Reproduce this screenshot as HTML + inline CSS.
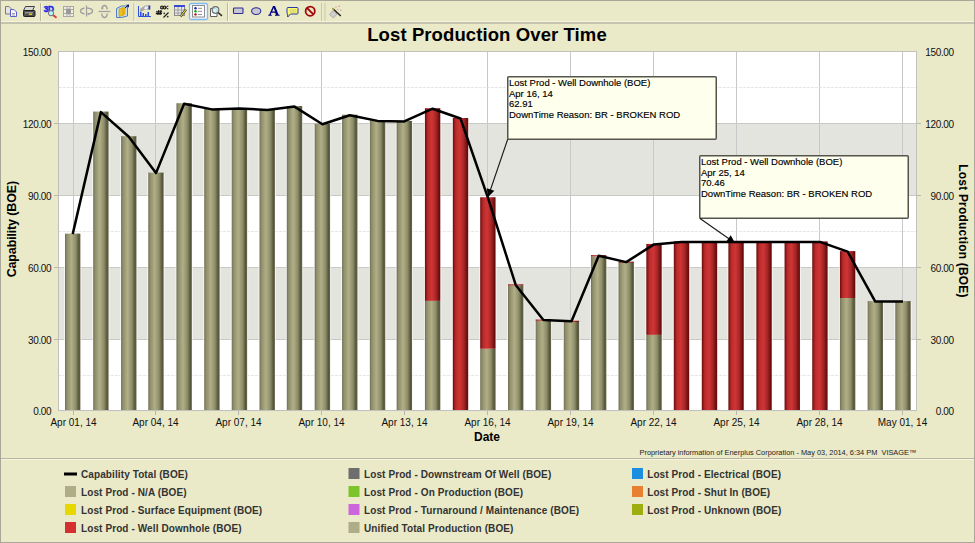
<!DOCTYPE html><html><head><meta charset="utf-8"><style>html,body{margin:0;padding:0;background:#EAE9C8;}svg{display:block;}text{font-family:"Liberation Sans",sans-serif;}</style></head><body>
<svg width="975" height="543" viewBox="0 0 975 543">
<defs>
<linearGradient id="gg" x1="0" x2="1" y1="0" y2="0">
<stop offset="0" stop-color="#707052"/><stop offset="0.12" stop-color="#8E8E6C"/><stop offset="0.42" stop-color="#B0AF86"/><stop offset="0.7" stop-color="#8F8E6B"/><stop offset="0.9" stop-color="#56563A"/><stop offset="1" stop-color="#66664C"/>
</linearGradient>
<linearGradient id="rg" x1="0" x2="1" y1="0" y2="0">
<stop offset="0" stop-color="#6A0808"/><stop offset="0.08" stop-color="#901818"/><stop offset="0.2" stop-color="#B82C2C"/><stop offset="0.45" stop-color="#D23434"/><stop offset="0.7" stop-color="#A82828"/><stop offset="0.88" stop-color="#781414"/><stop offset="0.95" stop-color="#6A0A0A"/><stop offset="1" stop-color="#7A1E1E"/>
</linearGradient>
</defs>
<rect x="0" y="0" width="975" height="543" fill="#EAE9C8"/>
<rect x="0" y="0" width="975" height="1" fill="#A9A898"/>
<rect x="0" y="0" width="1" height="543" fill="#A9A898"/>
<rect x="974" y="0" width="1" height="543" fill="#A9A898"/>
<rect x="0" y="542" width="975" height="1" fill="#A9A898"/>
<g>
<!-- copy -->
<path d="M5.5 6.5 h3.5 l2 2 v5.5 h-5.5 z" fill="#E4E4E4" stroke="#7A7A7A" stroke-width="1"/>
<path d="M10.5 9.5 h3.5 l2.5 2.5 v4.5 h-6 z" fill="#F6F6FF" stroke="#5C5CD0" stroke-width="1"/>
<rect x="12" y="13" width="3" height="0.8" fill="#909090"/><rect x="12" y="14.6" width="3" height="0.8" fill="#909090"/>
<!-- printer -->
<path d="M25.5 6.5 h9 l-2 4 h-9 z" fill="#D8D8D8" stroke="#404040" stroke-width="1"/>
<rect x="23.5" y="10.5" width="11.5" height="6" rx="1" fill="#505050" stroke="#202020" stroke-width="1"/>
<rect x="25" y="12" width="8" height="1.5" fill="#909090"/>
<rect x="29" y="13.5" width="3" height="1.5" fill="#D8D000"/>
<!-- separators -->
<rect x="40" y="3" width="1" height="18" fill="#B8B7A4"/><rect x="41" y="3" width="1" height="18" fill="#F8F6E0"/>
<!-- 3D -->
<text x="43.8" y="11.9" font-size="8.2" font-weight="bold" fill="#1A2CE8" font-family="Liberation Sans" letter-spacing="-0.4" stroke="#1A2CE8" stroke-width="0.5">3D</text>
<circle cx="51" cy="13.2" r="2.6" fill="#B8F0F8" stroke="#707070" stroke-width="1"/>
<line x1="53" y1="15" x2="56.5" y2="17.8" stroke="#E03838" stroke-width="1.8"/>
<!-- grid (disabled) -->
<rect x="63.5" y="6.5" width="10" height="10" fill="#F0EFE0" stroke="#A8A8A8" stroke-width="1"/>
<line x1="67" y1="6.5" x2="67" y2="16.5" stroke="#A8A8A8"/><line x1="70" y1="6.5" x2="70" y2="16.5" stroke="#A8A8A8"/>
<line x1="63.5" y1="9.5" x2="73.5" y2="9.5" stroke="#A8A8A8"/><line x1="63.5" y1="13.5" x2="73.5" y2="13.5" stroke="#A8A8A8"/>
<ellipse cx="68.5" cy="11.5" rx="2.5" ry="3" fill="#989898"/>
<!-- rotate h -->
<line x1="86.5" y1="5.5" x2="86.5" y2="16.5" stroke="#A0A0A0" stroke-width="1.2"/>
<path d="M84.5 8 Q80.5 9 80.5 11 Q80.5 13 84.5 14" fill="none" stroke="#A0A0A0" stroke-width="1.4"/>
<path d="M87 8 Q92.5 8.5 92.5 11 Q92.5 13.5 88 14" fill="none" stroke="#A0A0A0" stroke-width="1.4"/>
<path d="M87.5 12.5 l2 1.5 l-2 1.5 z" fill="#A0A0A0"/>
<!-- rotate v -->
<line x1="98.5" y1="11.5" x2="110.5" y2="11.5" stroke="#A0A0A0" stroke-width="1.2"/>
<path d="M101.8 9.5 Q102 5.5 104.5 5.5 Q107 5.5 107.2 9.5" fill="none" stroke="#A0A0A0" stroke-width="1.4"/>
<path d="M101.8 13.5 Q102 17.5 104.5 17.5 Q107 17.5 107.2 13.5" fill="none" stroke="#A0A0A0" stroke-width="1.4"/>
<path d="M101 8.5 l1.5 -2 l1.5 2 z" fill="#A0A0A0"/>
<!-- folder -->
<path d="M116.5 8.5 l5 -2.5 h6 v10 l-6 1.5 h-5 z" fill="#C8E0F8" stroke="#5080C0" stroke-width="1"/>
<path d="M119 9 l4 -1.5 v8 l-4 1 z" fill="#F0C020" stroke="#C09000" stroke-width="0.6"/>
<path d="M123 8 l2.5 -1 v7.5 l-2.5 1 z" fill="#E8B010"/>
<path d="M126 4.8 h3 v3 z" fill="#101870"/><line x1="125" y1="8" x2="128.5" y2="5" stroke="#101870" stroke-width="1"/>
<rect x="133.5" y="3" width="1" height="18" fill="#B8B7A4"/><rect x="134.5" y="3" width="1" height="18" fill="#F8F6E0"/>
<!-- chart icon -->
<path d="M140 9 l5 -3.5 h5 v4 h-5 l-5 3 z" fill="#A8A8A8"/>
<path d="M145 6.5 h4 l-2 2.5 h-3 z" fill="#F0F0F0"/>
<rect x="148.5" y="5.5" width="1.8" height="4" fill="#2838C8"/>
<line x1="138.5" y1="6" x2="138.5" y2="16.5" stroke="#3050D8" stroke-width="1"/>
<line x1="138.5" y1="16.5" x2="151" y2="16.5" stroke="#3050D8" stroke-width="1"/>
<rect x="140" y="12" width="1.5" height="4" fill="#2848F0"/><rect x="142.5" y="13" width="1.5" height="3" fill="#2848F0"/>
<rect x="145" y="14" width="1.5" height="2" fill="#2848F0"/><rect x="147.5" y="12" width="1.5" height="4" fill="#2848F0"/>
<!-- #abc% -->
<g fill="none" stroke="#181818">
<path d="M160.8 6 v3 M160.8 7.5 q0 -1.5 1.2 -1.5 q1 0 1 1.5 q0 1.5 -1 1.5 q-1.2 0 -1.2 -1.5" stroke-width="1.1"/>
<path d="M163.6 6 v3 M163.6 7.5 q0 -1.5 1.1 -1.5 q1 0 1 1.5 q0 1.5 -1 1.5 q-1.1 0 -1.1 -1.5" stroke-width="1.1"/>
<path d="M168.3 6.2 q-1.6 -0.5 -1.8 1.3 q0.2 1.8 1.8 1.3" stroke-width="1"/>
<path d="M156 11.8 h6.2 M155.8 13.6 h6.2 M158.8 10 l-1 5 M161 10 l-1 5" stroke-width="1.2"/>
<path d="M163.5 17.5 l5 -5" stroke-width="1.1"/>
</g>
<circle cx="164.3" cy="13.3" r="0.9" fill="#303030"/><circle cx="167.7" cy="16.6" r="0.9" fill="#303030"/>
<!-- table -->
<rect x="174.5" y="5.5" width="10" height="10" fill="#E8E8E8" stroke="#8C8C8C" stroke-width="1"/>
<rect x="174" y="5" width="11" height="2" fill="#3848D0"/>
<line x1="178" y1="7" x2="178" y2="15.5" stroke="#9C9C9C"/><line x1="181.5" y1="7" x2="181.5" y2="15.5" stroke="#9C9C9C"/>
<line x1="174.5" y1="10" x2="184.5" y2="10" stroke="#9C9C9C"/><line x1="174.5" y1="13" x2="184.5" y2="13" stroke="#9C9C9C"/>
<line x1="180.5" y1="16.5" x2="186" y2="9.5" stroke="#303030" stroke-width="2.2"/>
<line x1="180.5" y1="16.5" x2="186" y2="9.5" stroke="#F0E040" stroke-width="1.1"/>
<!-- legend pressed -->
<rect x="189.5" y="3.5" width="18" height="16" rx="1.5" fill="#F4F8FC" stroke="#80B8F0" stroke-width="1.3"/>
<rect x="192.5" y="5.5" width="12" height="11.5" fill="#FFFFFF" stroke="#8C8C8C" stroke-width="1"/>
<circle cx="195.5" cy="8.2" r="1.2" fill="#1020A8"/><circle cx="195.5" cy="11.2" r="1.2" fill="#10A010"/><circle cx="195.5" cy="14.4" r="1.2" fill="#A01010"/>
<rect x="198" y="7.8" width="4" height="1" fill="#909090"/><rect x="198" y="10.8" width="4" height="1" fill="#909090"/><rect x="198" y="14" width="4" height="1" fill="#909090"/>
<!-- zoom page -->
<path d="M210.5 8.5 h5 l1.5 1.5 v6.5 h-6.5 z" fill="#FFFFFF" stroke="#606060" stroke-width="1"/>
<circle cx="215.5" cy="10" r="3.3" fill="#C8F4F8" fill-opacity="0.8" stroke="#707070" stroke-width="1.2"/>
<line x1="218" y1="12.5" x2="222" y2="15.8" stroke="#303030" stroke-width="1.6"/>
<rect x="227" y="3" width="1" height="18" fill="#B8B7A4"/><rect x="228" y="3" width="1" height="18" fill="#F8F6E0"/>
<!-- rect -->
<rect x="233.5" y="8" width="9.5" height="5.5" rx="0.8" fill="#C8C8D4" stroke="#2C2C98" stroke-width="1.1"/>
<!-- ellipse -->
<ellipse cx="256.2" cy="11.1" rx="4.6" ry="3.4" fill="#C8C8D4" stroke="#2C2C98" stroke-width="1.1"/>
<!-- A -->
<path d="M273 6 h2 l3.6 8.8 h1 v1 h-4.6 v-1 h1 l-0.8 -2 h-3.8 l-0.7 2 h1.1 v1 h-3.5 v-1 h0.9 z M272.2 11.6 h2.9 l-1.5 -3.6 z" fill="#000080" fill-rule="evenodd"/>
<!-- bubble -->
<path d="M288 7.5 h9 q1 0 1 1 v4.5 q0 1 -1 1 h-6.5 l-2.8 3 v-3 h0 q-0.7 0 -0.7 -1 v-4.5 q0 -1 1 -1 z" fill="#FFFF70" stroke="#2838A8" stroke-width="1"/>
<rect x="289.5" y="9.5" width="7" height="1" fill="#C8C070"/><rect x="289.5" y="11.5" width="7" height="1" fill="#C8C070"/>
<!-- no -->
<circle cx="310.2" cy="11.2" r="4.6" fill="none" stroke="#A00808" stroke-width="1.8"/>
<line x1="307" y1="8" x2="313.4" y2="14.4" stroke="#A00808" stroke-width="1.8"/>
<rect x="321" y="3" width="1" height="18" fill="#C8C7B4"/><rect x="324.5" y="3" width="1" height="18" fill="#C8C7B4"/>
<!-- wand -->
<path d="M329.5 14.5 l3.5 -4 l4 3.5 l-3.5 4 z" fill="#D0D0D0" stroke="#A0A0A0" stroke-width="0.8"/>
<line x1="332.5" y1="8.2" x2="340.8" y2="16" stroke="#202020" stroke-width="1.4"/>
<line x1="332.5" y1="8.2" x2="334" y2="9.6" stroke="#D0C020" stroke-width="1.4"/>
<circle cx="336" cy="7" r="0.7" fill="#D890A0"/><circle cx="339.3" cy="6.3" r="0.8" fill="#D890A0"/><circle cx="337.8" cy="9.4" r="0.6" fill="#D890A0"/><circle cx="340.8" cy="10.3" r="0.8" fill="#D890A0"/>
</g>
<rect x="1" y="21" width="973" height="1" fill="#F6F4DA"/>
<rect x="1" y="22" width="973" height="2" fill="#C4C3B0"/>
<rect x="59" y="51" width="858" height="359" fill="#FFFFFF"/>
<rect x="59" y="123" width="858" height="72" fill="#E4E4DF"/>
<rect x="59" y="267" width="858" height="72" fill="#E4E4DF"/>
<line x1="59" x2="917" y1="375.5" y2="375.5" stroke="#E6E6E6" stroke-width="1" stroke-dasharray="3,1"/>
<line x1="59" x2="917" y1="231.5" y2="231.5" stroke="#E6E6E6" stroke-width="1" stroke-dasharray="3,1"/>
<line x1="59" x2="917" y1="87.5" y2="87.5" stroke="#E6E6E6" stroke-width="1" stroke-dasharray="3,1"/>
<line x1="59" x2="917" y1="339.5" y2="339.5" stroke="#C8C8C4" stroke-width="1"/>
<line x1="59" x2="917" y1="267.5" y2="267.5" stroke="#C8C8C4" stroke-width="1"/>
<line x1="59" x2="917" y1="195.5" y2="195.5" stroke="#C8C8C4" stroke-width="1"/>
<line x1="59" x2="917" y1="123.5" y2="123.5" stroke="#C8C8C4" stroke-width="1"/>
<line x1="73.5" x2="73.5" y1="51" y2="410" stroke="#C8C8C8" stroke-width="1"/>
<line x1="155.5" x2="155.5" y1="51" y2="410" stroke="#C8C8C8" stroke-width="1"/>
<line x1="238.5" x2="238.5" y1="51" y2="410" stroke="#C8C8C8" stroke-width="1"/>
<line x1="321.5" x2="321.5" y1="51" y2="410" stroke="#C8C8C8" stroke-width="1"/>
<line x1="404.5" x2="404.5" y1="51" y2="410" stroke="#C8C8C8" stroke-width="1"/>
<line x1="487.5" x2="487.5" y1="51" y2="410" stroke="#C8C8C8" stroke-width="1"/>
<line x1="570.5" x2="570.5" y1="51" y2="410" stroke="#C8C8C8" stroke-width="1"/>
<line x1="653.5" x2="653.5" y1="51" y2="410" stroke="#C8C8C8" stroke-width="1"/>
<line x1="736.5" x2="736.5" y1="51" y2="410" stroke="#C8C8C8" stroke-width="1"/>
<line x1="819.5" x2="819.5" y1="51" y2="410" stroke="#C8C8C8" stroke-width="1"/>
<line x1="902.5" x2="902.5" y1="51" y2="410" stroke="#C8C8C8" stroke-width="1"/>
<rect x="58.5" y="51.5" width="858" height="359" fill="none" stroke="#C0C0BC" stroke-width="1"/>
<rect x="64.00" y="234.61" width="17.4" height="175.39" fill="#FFFFFF" opacity="0.6"/>
<rect x="65.00" y="233.61" width="15.4" height="176.39" fill="url(#gg)"/>
<rect x="92.19" y="112.56" width="17.4" height="297.44" fill="#FFFFFF" opacity="0.6"/>
<rect x="93.19" y="111.56" width="15.4" height="298.44" fill="url(#gg)"/>
<rect x="120.07" y="137.21" width="17.4" height="272.79" fill="#FFFFFF" opacity="0.6"/>
<rect x="121.07" y="136.21" width="15.4" height="273.79" fill="url(#gg)"/>
<rect x="147.26" y="173.58" width="17.4" height="236.42" fill="#FFFFFF" opacity="0.6"/>
<rect x="148.26" y="172.58" width="15.4" height="237.42" fill="url(#gg)"/>
<rect x="175.45" y="104.18" width="17.4" height="305.82" fill="#FFFFFF" opacity="0.6"/>
<rect x="176.45" y="103.18" width="15.4" height="306.82" fill="url(#gg)"/>
<rect x="203.23" y="109.92" width="17.4" height="300.08" fill="#FFFFFF" opacity="0.6"/>
<rect x="204.23" y="108.92" width="15.4" height="301.08" fill="url(#gg)"/>
<rect x="230.72" y="108.97" width="17.4" height="301.03" fill="#FFFFFF" opacity="0.6"/>
<rect x="231.72" y="107.97" width="15.4" height="302.03" fill="url(#gg)"/>
<rect x="258.51" y="110.40" width="17.4" height="299.60" fill="#FFFFFF" opacity="0.6"/>
<rect x="259.51" y="109.40" width="15.4" height="300.60" fill="url(#gg)"/>
<rect x="285.80" y="107.05" width="17.4" height="302.95" fill="#FFFFFF" opacity="0.6"/>
<rect x="286.80" y="106.05" width="15.4" height="303.95" fill="url(#gg)"/>
<rect x="313.68" y="124.76" width="17.4" height="285.24" fill="#FFFFFF" opacity="0.6"/>
<rect x="314.68" y="123.76" width="15.4" height="286.24" fill="url(#gg)"/>
<rect x="341.07" y="115.67" width="17.4" height="294.33" fill="#FFFFFF" opacity="0.6"/>
<rect x="342.07" y="114.67" width="15.4" height="295.33" fill="url(#gg)"/>
<rect x="368.86" y="121.41" width="17.4" height="288.59" fill="#FFFFFF" opacity="0.6"/>
<rect x="369.86" y="120.41" width="15.4" height="289.59" fill="url(#gg)"/>
<rect x="395.64" y="121.89" width="17.4" height="288.11" fill="#FFFFFF" opacity="0.6"/>
<rect x="396.64" y="120.89" width="15.4" height="289.11" fill="url(#gg)"/>
<rect x="423.93" y="109.20" width="17.4" height="300.80" fill="#FFFFFF" opacity="0.6"/>
<rect x="424.93" y="300.87" width="15.4" height="109.13" fill="url(#gg)"/>
<rect x="424.93" y="108.20" width="15.4" height="192.66" fill="url(#rg)"/>
<rect x="451.82" y="119.02" width="17.4" height="290.98" fill="#FFFFFF" opacity="0.6"/>
<rect x="452.82" y="118.02" width="15.4" height="291.98" fill="url(#rg)"/>
<rect x="479.20" y="198.24" width="17.4" height="211.76" fill="#FFFFFF" opacity="0.6"/>
<rect x="480.20" y="348.73" width="15.4" height="61.27" fill="url(#gg)"/>
<rect x="480.20" y="197.24" width="15.4" height="151.50" fill="url(#rg)"/>
<rect x="506.99" y="285.35" width="17.4" height="124.65" fill="#FFFFFF" opacity="0.6"/>
<rect x="507.99" y="285.55" width="15.4" height="124.45" fill="url(#gg)"/>
<rect x="507.99" y="284.35" width="15.4" height="1.20" fill="url(#rg)"/>
<rect x="534.68" y="320.53" width="17.4" height="89.47" fill="#FFFFFF" opacity="0.6"/>
<rect x="535.68" y="320.73" width="15.4" height="89.27" fill="url(#gg)"/>
<rect x="535.68" y="319.53" width="15.4" height="1.20" fill="url(#rg)"/>
<rect x="562.77" y="321.73" width="17.4" height="88.27" fill="#FFFFFF" opacity="0.6"/>
<rect x="563.77" y="321.93" width="15.4" height="88.07" fill="url(#gg)"/>
<rect x="563.77" y="320.73" width="15.4" height="1.20" fill="url(#rg)"/>
<rect x="589.95" y="256.15" width="17.4" height="153.85" fill="#FFFFFF" opacity="0.6"/>
<rect x="590.95" y="256.35" width="15.4" height="153.65" fill="url(#gg)"/>
<rect x="590.95" y="255.15" width="15.4" height="1.20" fill="url(#rg)"/>
<rect x="617.54" y="262.62" width="17.4" height="147.38" fill="#FFFFFF" opacity="0.6"/>
<rect x="618.54" y="262.81" width="15.4" height="147.19" fill="url(#gg)"/>
<rect x="618.54" y="261.62" width="15.4" height="1.20" fill="url(#rg)"/>
<rect x="645.33" y="244.90" width="17.4" height="165.10" fill="#FFFFFF" opacity="0.6"/>
<rect x="646.33" y="334.85" width="15.4" height="75.15" fill="url(#gg)"/>
<rect x="646.33" y="243.90" width="15.4" height="90.95" fill="url(#rg)"/>
<rect x="672.81" y="242.37" width="17.4" height="167.63" fill="#FFFFFF" opacity="0.6"/>
<rect x="673.81" y="241.37" width="15.4" height="168.63" fill="url(#rg)"/>
<rect x="700.80" y="242.37" width="17.4" height="167.63" fill="#FFFFFF" opacity="0.6"/>
<rect x="701.80" y="241.37" width="15.4" height="168.63" fill="url(#rg)"/>
<rect x="727.39" y="242.37" width="17.4" height="167.63" fill="#FFFFFF" opacity="0.6"/>
<rect x="728.39" y="241.37" width="15.4" height="168.63" fill="url(#rg)"/>
<rect x="755.38" y="242.37" width="17.4" height="167.63" fill="#FFFFFF" opacity="0.6"/>
<rect x="756.38" y="241.37" width="15.4" height="168.63" fill="url(#rg)"/>
<rect x="783.56" y="242.37" width="17.4" height="167.63" fill="#FFFFFF" opacity="0.6"/>
<rect x="784.56" y="241.37" width="15.4" height="168.63" fill="url(#rg)"/>
<rect x="811.25" y="242.37" width="17.4" height="167.63" fill="#FFFFFF" opacity="0.6"/>
<rect x="812.25" y="241.37" width="15.4" height="168.63" fill="url(#rg)"/>
<rect x="838.94" y="252.08" width="17.4" height="157.92" fill="#FFFFFF" opacity="0.6"/>
<rect x="839.94" y="297.99" width="15.4" height="112.01" fill="url(#gg)"/>
<rect x="839.94" y="251.08" width="15.4" height="46.91" fill="url(#rg)"/>
<rect x="866.62" y="302.10" width="17.4" height="107.90" fill="#FFFFFF" opacity="0.6"/>
<rect x="867.62" y="301.10" width="15.4" height="108.90" fill="url(#gg)"/>
<rect x="894.31" y="302.10" width="17.4" height="107.90" fill="#FFFFFF" opacity="0.6"/>
<rect x="895.31" y="301.10" width="15.4" height="108.90" fill="url(#gg)"/>
<polyline points="72.7,234.1 100.9,112.1 128.8,136.7 156.0,173.1 184.1,103.7 211.9,109.4 239.4,108.5 267.2,109.9 294.5,106.6 322.4,124.3 349.8,115.2 377.6,120.9 404.3,121.4 432.6,108.7 460.5,118.5 487.9,197.7 515.7,284.9 543.4,320.0 571.5,321.2 598.7,255.7 626.2,262.1 654.0,244.4 681.5,241.9 709.5,241.9 736.1,241.9 764.1,241.9 792.3,241.9 819.9,241.9 847.6,251.6 875.3,301.6 903.0,301.6" fill="none" stroke="#000" stroke-width="2.5" stroke-linejoin="round"/>
<line x1="73.5" x2="73.5" y1="411" y2="415" stroke="#B8B8B0" stroke-width="1"/>
<line x1="155.5" x2="155.5" y1="411" y2="415" stroke="#B8B8B0" stroke-width="1"/>
<line x1="238.5" x2="238.5" y1="411" y2="415" stroke="#B8B8B0" stroke-width="1"/>
<line x1="321.5" x2="321.5" y1="411" y2="415" stroke="#B8B8B0" stroke-width="1"/>
<line x1="404.5" x2="404.5" y1="411" y2="415" stroke="#B8B8B0" stroke-width="1"/>
<line x1="487.5" x2="487.5" y1="411" y2="415" stroke="#B8B8B0" stroke-width="1"/>
<line x1="570.5" x2="570.5" y1="411" y2="415" stroke="#B8B8B0" stroke-width="1"/>
<line x1="653.5" x2="653.5" y1="411" y2="415" stroke="#B8B8B0" stroke-width="1"/>
<line x1="736.5" x2="736.5" y1="411" y2="415" stroke="#B8B8B0" stroke-width="1"/>
<line x1="819.5" x2="819.5" y1="411" y2="415" stroke="#B8B8B0" stroke-width="1"/>
<line x1="902.5" x2="902.5" y1="411" y2="415" stroke="#B8B8B0" stroke-width="1"/>
<line x1="54" x2="58" y1="339.5" y2="339.5" stroke="#B8B8B0" stroke-width="1"/>
<line x1="917" x2="921" y1="339.5" y2="339.5" stroke="#B8B8B0" stroke-width="1"/>
<line x1="54" x2="58" y1="267.5" y2="267.5" stroke="#B8B8B0" stroke-width="1"/>
<line x1="917" x2="921" y1="267.5" y2="267.5" stroke="#B8B8B0" stroke-width="1"/>
<line x1="54" x2="58" y1="195.5" y2="195.5" stroke="#B8B8B0" stroke-width="1"/>
<line x1="917" x2="921" y1="195.5" y2="195.5" stroke="#B8B8B0" stroke-width="1"/>
<line x1="54" x2="58" y1="123.5" y2="123.5" stroke="#B8B8B0" stroke-width="1"/>
<line x1="917" x2="921" y1="123.5" y2="123.5" stroke="#B8B8B0" stroke-width="1"/>
<text x="51.3" y="414.9" font-size="10" fill="#111" text-anchor="end" letter-spacing="-0.35">0.00</text>
<text x="953.8" y="414.9" font-size="10" fill="#111" text-anchor="end" letter-spacing="-0.35">0.00</text>
<text x="51.3" y="343.9" font-size="10" fill="#111" text-anchor="end" letter-spacing="-0.35">30.00</text>
<text x="953.8" y="343.9" font-size="10" fill="#111" text-anchor="end" letter-spacing="-0.35">30.00</text>
<text x="51.3" y="271.9" font-size="10" fill="#111" text-anchor="end" letter-spacing="-0.35">60.00</text>
<text x="953.8" y="271.9" font-size="10" fill="#111" text-anchor="end" letter-spacing="-0.35">60.00</text>
<text x="51.3" y="199.9" font-size="10" fill="#111" text-anchor="end" letter-spacing="-0.35">90.00</text>
<text x="953.8" y="199.9" font-size="10" fill="#111" text-anchor="end" letter-spacing="-0.35">90.00</text>
<text x="51.3" y="127.9" font-size="10" fill="#111" text-anchor="end" letter-spacing="-0.35">120.00</text>
<text x="953.8" y="127.9" font-size="10" fill="#111" text-anchor="end" letter-spacing="-0.35">120.00</text>
<text x="51.3" y="55.9" font-size="10" fill="#111" text-anchor="end" letter-spacing="-0.35">150.00</text>
<text x="953.8" y="55.9" font-size="10" fill="#111" text-anchor="end" letter-spacing="-0.35">150.00</text>
<text x="73.5" y="426" font-size="10" fill="#111" text-anchor="middle">Apr 01, 14</text>
<text x="155.5" y="426" font-size="10" fill="#111" text-anchor="middle">Apr 04, 14</text>
<text x="238.5" y="426" font-size="10" fill="#111" text-anchor="middle">Apr 07, 14</text>
<text x="321.5" y="426" font-size="10" fill="#111" text-anchor="middle">Apr 10, 14</text>
<text x="404.5" y="426" font-size="10" fill="#111" text-anchor="middle">Apr 13, 14</text>
<text x="487.5" y="426" font-size="10" fill="#111" text-anchor="middle">Apr 16, 14</text>
<text x="570.5" y="426" font-size="10" fill="#111" text-anchor="middle">Apr 19, 14</text>
<text x="653.5" y="426" font-size="10" fill="#111" text-anchor="middle">Apr 22, 14</text>
<text x="736.5" y="426" font-size="10" fill="#111" text-anchor="middle">Apr 25, 14</text>
<text x="819.5" y="426" font-size="10" fill="#111" text-anchor="middle">Apr 28, 14</text>
<text x="902.5" y="426" font-size="10" fill="#111" text-anchor="middle">May 01, 14</text>
<text x="487" y="41.4" font-size="18.5" font-weight="bold" fill="#000" text-anchor="middle" letter-spacing="0.1">Lost Production Over Time</text>
<text x="487" y="440.5" font-size="12" font-weight="bold" fill="#000" text-anchor="middle">Date</text>
<text transform="translate(16.3,229.2) rotate(-90)" font-size="12.5" font-weight="bold" fill="#000" text-anchor="middle" letter-spacing="-0.15">Capability (BOE)</text>
<text transform="translate(958.8,231) rotate(90)" font-size="12" font-weight="bold" fill="#000" text-anchor="middle" letter-spacing="0.2">Lost Production (BOE)</text>
<text x="639.5" y="454.6" font-size="7.4" fill="#222">Proprietary information of Enerplus Corporation - May 03, 2014, 6:34 PM&#160; VISAGE™</text>
<rect x="1" y="458" width="973" height="1" fill="#B8B7A4"/>
<rect x="1" y="459" width="973" height="1" fill="#F6F4DA"/>
<rect x="64" y="472.5" width="13" height="3" fill="#000"/>
<text x="81" y="477.5" font-size="10" font-weight="bold" fill="#333" letter-spacing="0.1">Capability Total (BOE)</text>
<rect x="65" y="486.0" width="11" height="11" fill="#AEAD88"/>
<text x="81" y="495.5" font-size="10" font-weight="bold" fill="#333" letter-spacing="0.1">Lost Prod - N/A (BOE)</text>
<rect x="65" y="504.0" width="11" height="11" fill="#E6D800"/>
<text x="81" y="513.5" font-size="10" font-weight="bold" fill="#333" letter-spacing="0.1">Lost Prod - Surface Equipment (BOE)</text>
<rect x="65" y="522.0" width="11" height="11" fill="#D43030"/>
<text x="81" y="531.5" font-size="10" font-weight="bold" fill="#333" letter-spacing="0.1">Lost Prod - Well Downhole (BOE)</text>
<rect x="348.5" y="468.0" width="11" height="11" fill="#6E6E6E"/>
<text x="364" y="477.5" font-size="10" font-weight="bold" fill="#333" letter-spacing="0.1">Lost Prod - Downstream Of Well (BOE)</text>
<rect x="348.5" y="486.0" width="11" height="11" fill="#7CC42A"/>
<text x="364" y="495.5" font-size="10" font-weight="bold" fill="#333" letter-spacing="0.1">Lost Prod - On Production (BOE)</text>
<rect x="348.5" y="504.0" width="11" height="11" fill="#CC66DD"/>
<text x="364" y="513.5" font-size="10" font-weight="bold" fill="#333" letter-spacing="0.1">Lost Prod - Turnaround / Maintenance (BOE)</text>
<rect x="348.5" y="522.0" width="11" height="11" fill="#AEAD88"/>
<text x="364" y="531.5" font-size="10" font-weight="bold" fill="#333" letter-spacing="0.1">Unified Total Production (BOE)</text>
<rect x="632" y="468.0" width="11" height="11" fill="#1C8EE0"/>
<text x="647.2" y="477.5" font-size="10" font-weight="bold" fill="#333" letter-spacing="0.1">Lost Prod - Electrical (BOE)</text>
<rect x="632" y="486.0" width="11" height="11" fill="#E88030"/>
<text x="647.2" y="495.5" font-size="10" font-weight="bold" fill="#333" letter-spacing="0.1">Lost Prod - Shut In (BOE)</text>
<rect x="632" y="504.0" width="11" height="11" fill="#9EAE0E"/>
<text x="647.2" y="513.5" font-size="10" font-weight="bold" fill="#333" letter-spacing="0.1">Lost Prod - Unknown (BOE)</text>
<rect x="507.75" y="76.75" width="208.5" height="62.5" rx="1" fill="#FFFFEE" stroke="#55554C" stroke-width="1.5"/>
<text x="509" y="85.7" font-size="9.5" fill="#000" stroke="#000" stroke-width="0.15">Lost Prod - Well Downhole (BOE)</text>
<text x="509" y="96.5" font-size="9.5" fill="#000" stroke="#000" stroke-width="0.15">Apr 16, 14</text>
<text x="509" y="107.3" font-size="9.5" fill="#000" stroke="#000" stroke-width="0.15">62.91</text>
<text x="509" y="118.1" font-size="9.5" fill="#000" stroke="#000" stroke-width="0.15">DownTime Reason: BR - BROKEN ROD</text>
<line x1="507.7" y1="139.3" x2="488" y2="197" stroke="#1A1A1A" stroke-width="1.1"/>
<path d="M488.00 197.00 L486.80 188.14 L494.37 190.72 Z" fill="#000"/>
<rect x="699.75" y="155.75" width="208.5" height="62.5" rx="1" fill="#FFFFEE" stroke="#55554C" stroke-width="1.5"/>
<text x="701" y="164.7" font-size="9.5" fill="#000" stroke="#000" stroke-width="0.15">Lost Prod - Well Downhole (BOE)</text>
<text x="701" y="175.5" font-size="9.5" fill="#000" stroke="#000" stroke-width="0.15">Apr 25, 14</text>
<text x="701" y="186.3" font-size="9.5" fill="#000" stroke="#000" stroke-width="0.15">70.46</text>
<text x="701" y="197.1" font-size="9.5" fill="#000" stroke="#000" stroke-width="0.15">DownTime Reason: BR - BROKEN ROD</text>
<line x1="699.7" y1="218.3" x2="735" y2="243" stroke="#1A1A1A" stroke-width="1.1"/>
<path d="M735.00 243.00 L726.15 241.69 L730.74 235.14 Z" fill="#000"/>
</svg></body></html>
